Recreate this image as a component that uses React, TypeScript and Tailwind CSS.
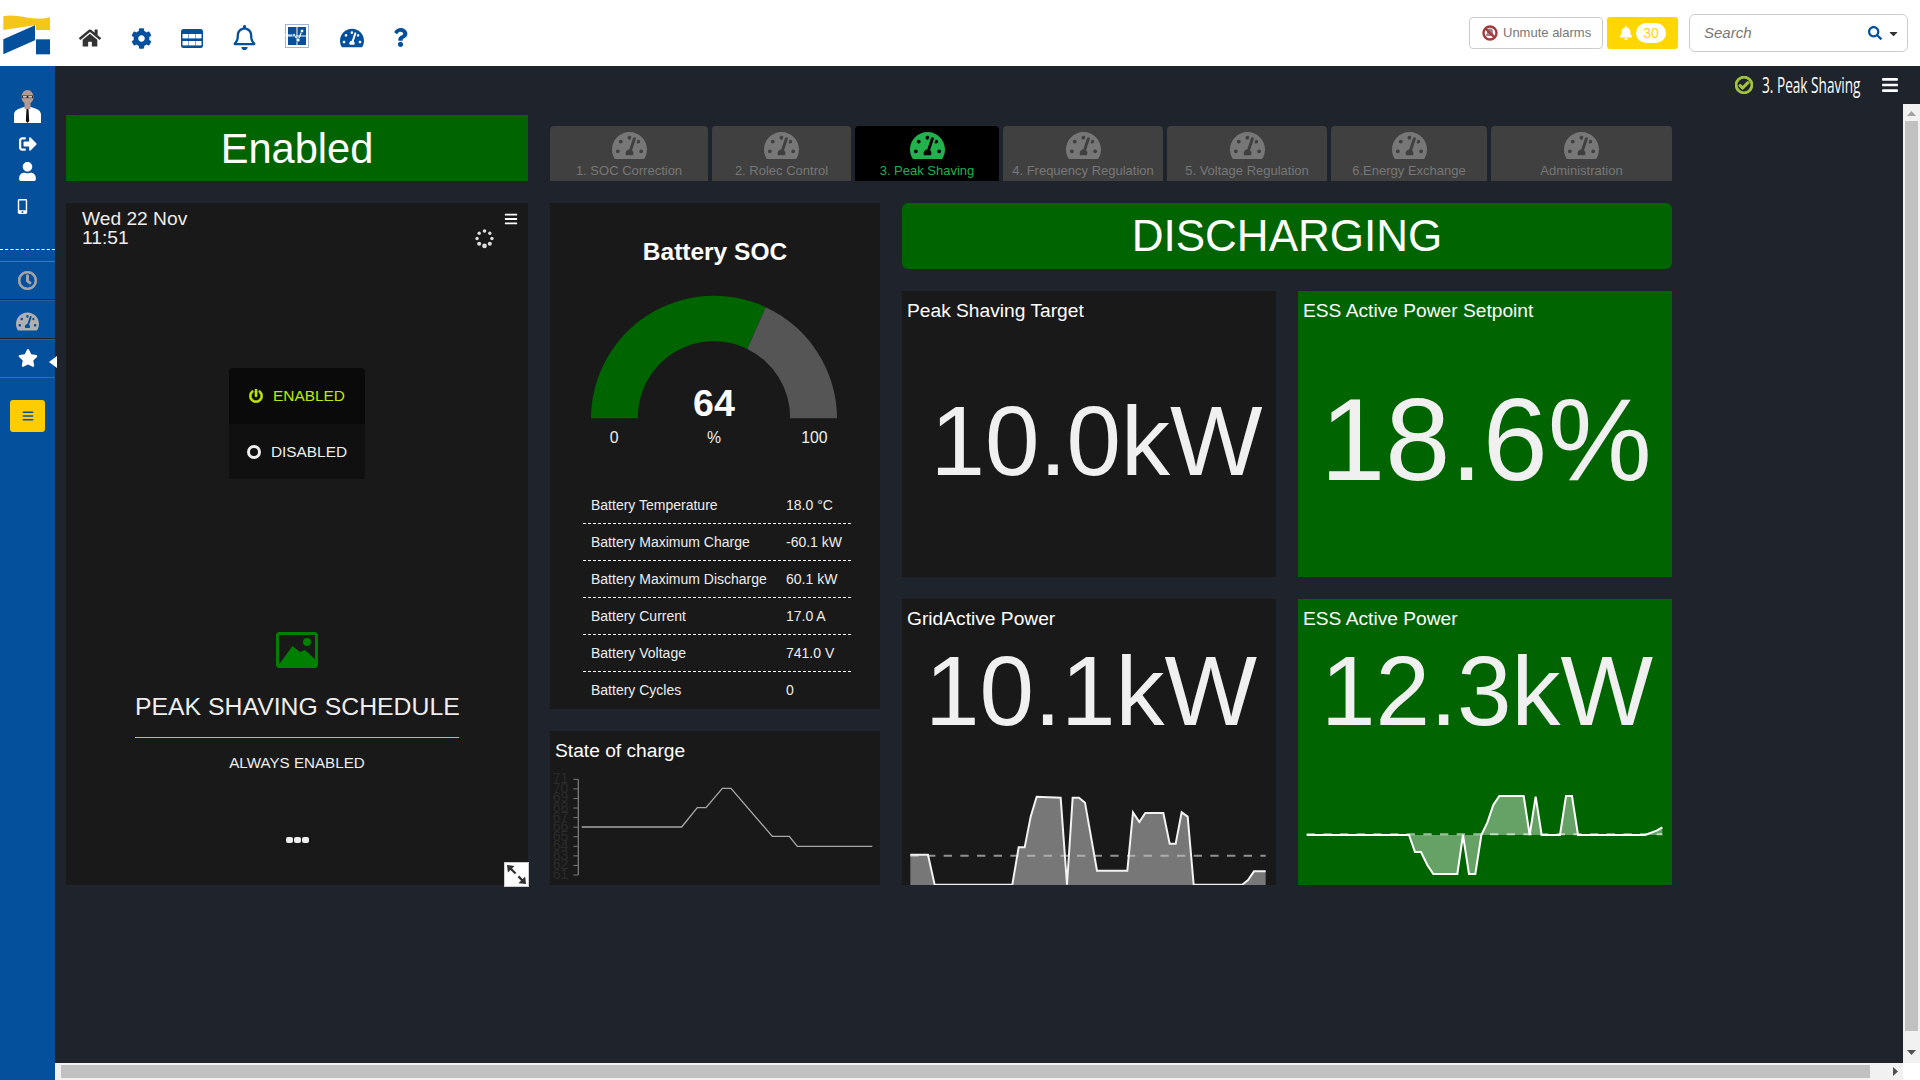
import { FaBars, FaBell, FaCaretDown, FaCog, FaHome, FaMobileAlt, FaPowerOff, FaQuestion, FaRegBell, FaRegCheckCircle, FaRegClock, FaSearch, FaSignOutAlt, FaStar, FaTachometerAlt, FaUser } from "react-icons/fa"

const tabs = [
    { name: "1. SOC Correction", width: "w-[158px]" },
    { name: "2. Rolec Control", width: "w-[139px]" },
    { name: "3. Peak Shaving", width: "w-[144px]", active: true },
    { name: "4. Frequency Regulation", width: "w-[160px]" },
    { name: "5. Voltage Regulation", width: "w-[160px]" },
    { name: "6.Energy Exchange", width: "w-[156px]" },
    { name: "Administration", width: "w-[181px]" },
]

const batteryRows = [
    ["Battery Temperature", "18.0 °C"],
    ["Battery Maximum Charge", "-60.1 kW"],
    ["Battery Maximum Discharge", "60.1 kW"],
    ["Battery Current", "17.0 A"],
    ["Battery Voltage", "741.0 V"],
    ["Battery Cycles", "0"],
]

/* chart points are in 3x px, the svg viewBox scales them back down */
const gridLine = "62,224 115,224 135,314 368,314 387,202 405,202 423,110 441,50 513,53 532,314 549,53 568,53 586,68 622,272 713,272 730,97 749,126 767,99 821,99 840,191 858,191 876,97 894,110 912,314 1058,314 1075,300 1093,274 1128,274"
const essLine = "50,165 357,165 375,216 393,216 412,255 430,282 502,282 519,165 537,282 556,282 574,165 592,128 610,75 628,48 701,48 719,165 737,50 755,165 810,165 828,48 846,48 864,165 1065,165 1100,152 1117,142"
const socLine = "125,321 425,321 472,263 498,263 547,205 573,205 697,349 748,349 772,379 997,379"
const socLabels = ["71", "70", "69", "68", "67", "66", "65", "64", "63", "62", "61"]

function Logo() {
    return (
        <svg viewBox="0 0 180 165" className="w-[60px] h-[55px] shrink-0">
            <path d="M10 31 C50 20 100 48 150 34 L150 72 L108 72 L108 57 L10 72 Z" fill="#f5c518" />
            <path d="M10 100 L105 58 L105 103 L10 145 Z" fill="#05509d" />
            <rect x="108" y="100" width="42" height="45" fill="#05509d" />
        </svg>
    )
}

function TableIcon() {
    const cells = [6, 13, 20]
    return (
        <svg viewBox="0 0 22 19" className="w-[22px] h-[19px]">
            <rect width="22" height="19" rx="2.5" fill="#05509d" />
            {cells.map((y) => [1.5, 8, 14.5].map((x) => (
                <rect key={`${x}-${y}`} x={x} y={y - 1} width="6" height="4.4" fill="#fff" />
            )))}
        </svg>
    )
}

function NetworkIcon() {
    return (
        <svg viewBox="0 0 24 24" className="w-[24px] h-[24px] -mt-[4px]">
            <rect x="0.5" y="0.5" width="23" height="23" fill="#fff" stroke="#9fb4d6" />
            <rect x="3" y="3" width="8.5" height="8.5" fill="#05509d" />
            <rect x="12.5" y="3" width="8.5" height="8.5" fill="#05509d" />
            <rect x="3" y="12.5" width="8.5" height="8.5" fill="#05509d" />
            <rect x="12.5" y="12.5" width="8.5" height="8.5" fill="#05509d" />
            <path d="M0 11 H9 L13 16 L17 7" fill="none" stroke="#fff" strokeWidth="1.2" />
            <circle cx="9" cy="11" r="1.5" fill="#fff" stroke="#05509d" strokeWidth="0.7" />
            <circle cx="13" cy="16" r="2" fill="#fff" stroke="#05509d" strokeWidth="0.7" />
            <circle cx="17" cy="7" r="1.8" fill="#fff" stroke="#05509d" strokeWidth="0.7" />
        </svg>
    )
}

function MutedBell() {
    return (
        <svg viewBox="0 0 16 16" className="w-[16px] h-[16px] mr-[5px] shrink-0">
            <path d="M8 3.5 C5.8 3.5 5 5.2 5 7 C5 9 4 10 3.5 11 H12.5 C12 10 11 9 11 7 C11 5.2 10.2 3.5 8 3.5 Z" fill="#8a8a8a" />
            <circle cx="8" cy="8" r="6.5" fill="none" stroke="#a53a3a" strokeWidth="2.4" />
            <path d="M3.5 3.5 L12.5 12.5" stroke="#a53a3a" strokeWidth="2.4" />
        </svg>
    )
}

function Avatar() {
    return (
        <svg viewBox="0 0 27 33" className="w-[27px] h-[33px]">
            <path d="M0 33 V25 C0 20 4 19 10 17 H17 C23 19 27 20 27 25 V33 Z" fill="#fff" />
            <rect x="10.5" y="12" width="6" height="7" fill="#b49a90" />
            <ellipse cx="13.5" cy="7" rx="6" ry="7" fill="#b49a90" />
            <rect x="8" y="5.5" width="11" height="2.6" fill="#2a2a2a" />
            <rect x="9" y="6" width="3.6" height="1.6" fill="#d7c6c0" />
            <rect x="14.4" y="6" width="3.6" height="1.6" fill="#d7c6c0" />
            <path d="M12.5 19 H14.5 L15.2 31 L13.5 33 L11.8 31 Z" fill="#111" />
        </svg>
    )
}

function Spinner() {
    const dots = [[8, 1, 1.7], [13, 3, 1.6], [15, 8, 1.6], [13, 13, 1.9], [8, 15, 2.2], [3, 13, 1.9], [1, 8, 1.6], [3, 3, 1.6]]
    return (
        <svg viewBox="0 0 16 16" className="w-[17px] h-[17px] overflow-visible">
            {dots.map(([x, y, r]) => <circle key={`${x}-${y}`} cx={x} cy={y} r={r} fill="#ddd" />)}
        </svg>
    )
}

function SideRow({ children, border }: { children: React.ReactNode; border: string }) {
    return <div className={`relative flex items-center justify-center w-full h-[38px] border-b ${border}`}>{children}</div>
}

function Sidebar() {
    return (
        <aside className="relative z-10 flex flex-col items-center w-[55px] shrink-0 bg-[#05509d]">
            <div className="mt-[24px]"><Avatar /></div>
            <FaSignOutAlt className="mt-[12px] text-white" size={18} />
            <FaUser className="mt-[9px] text-white" size={19} />
            <FaMobileAlt className="mt-[18px] text-white -ml-[10px]" size={15} />
            <div className="mt-[35px] w-full border-t border-dashed border-white"></div>
            <div className="mt-[11px] w-full h-px bg-[#5c6f86]"></div>
            <SideRow border="border-[#1d2530]"><FaRegClock className="text-[#a6a6a6]" size={19} stroke="currentColor" strokeWidth={24} /></SideRow>
            <div className="w-full h-px bg-[#2c5c92]"></div>
            <SideRow border="border-[#1d2530]"><FaTachometerAlt className="mt-[3px] text-[#b0b0b0]" size={23} /></SideRow>
            <div className="w-full h-px bg-[#2c5c92]"></div>
            <SideRow border="border-[#3a70b0]">
                <FaStar className="text-white -mt-[2px]" size={20} />
                <svg viewBox="0 0 8 12" className="absolute -right-[2px] top-[16px] w-[8px] h-[12px]"><polygon points="8,0 0,6 8,12" fill="#fff" /></svg>
            </SideRow>
            <div className="flex items-center justify-center mt-[22px] w-[35px] h-[32px] rounded-[3px] bg-[#ffcc00]">
                <FaBars className="text-[#05509d]" size={12} />
            </div>
        </aside>
    )
}

function Header() {
    return (
        <header className="flex items-center h-[66px] shrink-0 bg-white">
            <div className="flex items-center h-full pt-[1px]">
                <Logo />
                <div className="flex items-center w-[60px] justify-center text-[#333] pt-[9px]"><FaHome size={22} /></div>
                <div className="flex items-center w-[42px] justify-center text-[#05509d] pt-[9px]"><FaCog size={21} /></div>
                <div className="flex items-center w-[60px] justify-center pt-[9px]"><TableIcon /></div>
                <div className="flex items-center w-[45px] justify-center text-[#05509d] pt-[8px]"><FaRegBell size={25} /></div>
                <div className="flex items-center w-[60px] justify-center pt-[8px]"><NetworkIcon /></div>
                <div className="flex items-center w-[49px] justify-center text-[#05509d] pt-[9px]"><FaTachometerAlt size={24} /></div>
                <div className="flex items-center w-[49px] justify-center text-[#05509d] pt-[8px]"><FaQuestion size={19} /></div>
            </div>
            <div className="flex items-center ml-auto pr-[12px]">
                <button className="flex items-center w-[134px] h-[32px] pl-[12px] rounded-[4px] border border-[#ccc] bg-white text-[13px] text-[#777]">
                    <MutedBell />
                    Unmute alarms
                </button>
                <div className="flex items-center w-[71px] h-[32px] ml-[4px] pl-[12px] rounded-[3px] bg-[#ffd700]">
                    <FaBell className="text-white" size={14} />
                    <span className="flex items-center justify-center w-[30px] h-[20px] ml-[3px] rounded-full bg-white text-[14px] text-[#ffd700]">30</span>
                </div>
                <div className="flex items-center w-[219px] h-[38px] ml-[11px] pl-[14px] rounded-[6px] border border-[#ccc] bg-white">
                    <span className="text-[15px] italic text-[#777]">Search</span>
                    <FaSearch className="ml-auto text-[#05509d]" size={14} />
                    <FaCaretDown className="ml-[5px] mr-[7px] text-[#333]" size={13} />
                </div>
            </div>
        </header>
    )
}

function LeftPanel() {
    return (
        <div className="relative flex flex-col items-center h-[682px] bg-[#191919] text-[#eee]">
            <div className="flex justify-between w-full h-[45px] pl-[16px] pt-[6px] pr-[10px]">
                <div className="text-[19.2px] leading-[19px] whitespace-nowrap">Wed 22 Nov<br />11:51</div>
                <div className="flex">
                    <div className="mt-[21px]"><Spinner /></div>
                    <FaBars className="mt-[3px] ml-[11px] text-white" size={14} />
                </div>
            </div>
            <div className="flex flex-col w-[136px] mt-[120px] text-[15.4px]">
                <div className="flex items-center justify-center h-[56px] gap-[10px] rounded-t-[4px] bg-[#0a0a0a] text-[#bfe800]">
                    <FaPowerOff size={14} stroke="currentColor" strokeWidth={16} />ENABLED
                </div>
                <div className="flex items-center justify-center h-[55px] gap-[10px] pt-[1px] bg-[#101010]">
                    <div className="w-[14px] h-[14px] rounded-full border-[3px] border-[#eee]"></div>DISABLED
                </div>
            </div>
            <svg viewBox="0 0 42 36" className="w-[42px] h-[36px] mt-[153px]">
                <rect x="1.5" y="1.5" width="39" height="33" rx="2" fill="none" stroke="#008000" strokeWidth="3" />
                <circle cx="31" cy="10" r="4" fill="#008000" />
                <path d="M2 34 L16.5 14 L24 20 L29 18 L40 28 V34 Z" fill="#008000" />
            </svg>
            <div className="w-[324px] mt-[25px] pb-[16px] border-b border-[#f0b429] text-center text-[24.8px] leading-[28px] whitespace-nowrap">PEAK SHAVING SCHEDULE</div>
            <div className="mt-[16px] text-[15.2px] leading-[18px]">ALWAYS ENABLED</div>
            <div className="flex gap-[1px] mt-[65px]">
                <div className="w-[7px] h-[6px] rounded-[2px] bg-[#eee]"></div>
                <div className="w-[7px] h-[6px] rounded-[2px] bg-[#eee]"></div>
                <div className="w-[7px] h-[6px] rounded-[2px] bg-[#eee]"></div>
            </div>
            <div className="absolute -right-[1px] -bottom-[2px] w-[25px] h-[25px] bg-white border border-[#ccc]">
                <svg viewBox="0 0 24 24" className="w-full h-full">
                    <path d="M5 5 L11 11 M14 14 L19 19" stroke="#333" strokeWidth="2.4" fill="none" />
                    <polygon points="2,2 10,3 3,10" fill="#333" />
                    <polygon points="22,22 14,21 21,14" fill="#333" />
                </svg>
            </div>
        </div>
    )
}

function BatteryPanel() {
    return (
        <div className="flex flex-col h-[506px] bg-[#191919]">
            <h2 className="mt-[37px] text-center text-[24.5px] leading-[24px] font-bold text-white">Battery SOC</h2>
            <svg viewBox="550 280 330 170" className="block w-[330px] h-[170px] mt-[16px]">
                <path d="M589.5 420 A124.5 124.5 0 0 1 766.3 307.5 L747.7 349.7 A77 77 0 0 0 637 420 Z" fill="#006400" />
                <path d="M766.3 307.5 A124.5 124.5 0 0 1 838.5 420 L791 420 A77 77 0 0 0 747.7 349.7 Z" fill="#555" />
                <text x="714" y="418" textAnchor="middle" fontSize="38" fontWeight="700" fill="#fff">64</text>
                <text x="613" y="444.5" textAnchor="middle" fontSize="16" fill="#eee">0</text>
                <text x="714" y="444.5" textAnchor="middle" fontSize="16" fill="#eee">%</text>
                <text x="815.5" y="444.5" textAnchor="middle" fontSize="16" fill="#eee">100</text>
            </svg>
            <div className="flex flex-col w-[268px] ml-[33px] mt-[39px] text-[14px] text-[#eee]">
                {batteryRows.map(([label, value], i) => (
                    <div key={label} className={`flex items-center h-[37px] ${i < 5 ? "border-b border-dashed border-white" : ""}`}>
                        <span className="w-[203px] pl-[8px] whitespace-nowrap">{label}</span>
                        <span className="whitespace-nowrap">{value}</span>
                    </div>
                ))}
            </div>
        </div>
    )
}

function SocPanel() {
    return (
        <div className="flex flex-col h-[154px] bg-[#191919]">
            <div className="h-[39px] pl-[5px] pt-[9px] text-[19.2px] leading-[22px] text-white">State of charge</div>
            <svg viewBox="30 150 990 345" className="block w-[330px] h-[115px]">
                {socLabels.map((label, i) => (
                    <text key={label} x="38" y={190 + i * 28.7} fontSize="42" fill="#2b2b2b">{label}</text>
                ))}
                <path d="M115 178 V465" stroke="#777" strokeWidth="4" />
                {socLabels.map((label, i) => (
                    <path key={label} d={`M100 ${178 + i * 28.7} H115`} stroke="#777" strokeWidth="3" />
                ))}
                <polyline points={socLine} fill="none" stroke="#a8a8a8" strokeWidth="4" />
            </svg>
        </div>
    )
}

function ValueCard({ title, value, green, valueClass, children }: { title: string; value: string; green?: boolean; valueClass: string; children?: React.ReactNode }) {
    return (
        <div className={`flex flex-col h-[286px] overflow-hidden ${green ? "bg-[#006400]" : "bg-[#191919]"}`}>
            <div className="pl-[5px] pt-[9px] text-[19.2px] leading-[22px] text-white">{title}</div>
            <div className={`text-center leading-none whitespace-nowrap text-[#f0f0f0] ${valueClass}`}>{value}</div>
            {children}
        </div>
    )
}

function Scrollbars() {
    return (
        <div className="flex flex-col items-center w-[17px] shrink-0 bg-[#f1f1f1]">
            <svg viewBox="0 0 9 5" className="w-[9px] h-[5px] mt-[7px]"><polygon points="4.5,0 9,5 0,5" fill="#a3a3a3" /></svg>
            <div className="w-[13px] h-[910px] mt-[5px] bg-[#c1c1c1]"></div>
            <svg viewBox="0 0 9 5" className="w-[9px] h-[5px] mt-[19px]"><polygon points="0,0 9,0 4.5,5" fill="#505050" /></svg>
        </div>
    )
}

export default function App() {
    return (
        <div className="flex flex-col w-screen h-screen overflow-hidden bg-white font-['Liberation_Sans',Arial,sans-serif]">
            <Header />
            <div className="flex flex-1 min-h-0">
                <Sidebar />
                <main className="flex flex-col flex-1 min-w-0 bg-[#1f232b]">
                    <div className="flex items-center justify-end h-[38px] shrink-0 pr-[21px] text-white">
                        <FaRegCheckCircle className="text-[#a4c639]" size={18} stroke="currentColor" strokeWidth={30} />
                        <span className="w-[99px] ml-[9px] mr-[20px] -mt-[2px] origin-left scale-x-[0.62] font-['Open_Sans',sans-serif] text-[22px] leading-[24px] whitespace-nowrap">3. Peak Shaving</span>
                        <FaBars size={18} />
                    </div>
                    <div className="flex flex-1 min-h-0">
                        <div className="flex flex-1 min-w-0 gap-[22px] pl-[11px] pt-[11px]">
                            <div className="flex flex-col w-[462px] gap-[22px]">
                                <div className="flex items-center justify-center h-[66px] pt-[2px] bg-[#006400] text-[41.6px] text-white">Enabled</div>
                                <LeftPanel />
                            </div>
                            <div className="flex flex-col w-[1122px] pt-[11px]">
                                <div className="flex gap-[4px] h-[55px]">
                                    {tabs.map((tab) => (
                                        <div key={tab.name} className={`flex flex-col items-center ${tab.width} pt-[2px] rounded-t-[4px] text-[13px] leading-[13px] whitespace-nowrap ${tab.active ? "bg-black text-[#22b14c]" : "bg-[#404040] text-[#777]"}`}>
                                            <FaTachometerAlt size={35} />
                                            <span className="mt-[1px]">{tab.name}</span>
                                        </div>
                                    ))}
                                </div>
                                <div className="flex gap-[22px] mt-[22px]">
                                    <div className="flex flex-col w-[330px] gap-[22px]">
                                        <BatteryPanel />
                                        <SocPanel />
                                    </div>
                                    <div className="flex flex-col w-[770px] gap-[22px]">
                                        <div className="flex items-center justify-center h-[66px] rounded-[6px] bg-[#006400] text-[44px] text-white">DISCHARGING</div>
                                        <div className="grid grid-cols-2 gap-[22px]">
                                            <ValueCard title="Peak Shaving Target" value="10.0kW" valueClass="text-[98px] mt-[70px] pl-[15px]" />
                                            <ValueCard title="ESS Active Power Setpoint" value="18.6%" green valueClass="text-[117px] mt-[59px] pl-[2px]" />
                                            <ValueCard title="GridActive Power" value="10.1kW" valueClass="text-[98px] mt-[12px] pl-[4px]">
                                                <svg viewBox="37 0 1122 315" className="block w-[374px] h-[105px] mt-auto">
                                                    <polygon points={`62,315 ${gridLine} 1128,315`} fill="#777" />
                                                    <path d="M62 227 H1128" stroke="#c4c4c4" strokeOpacity="0.7" strokeWidth="6" strokeDasharray="25 25" />
                                                    <polyline points={gridLine} fill="none" stroke="#f2f2f2" strokeWidth="6" />
                                                </svg>
                                            </ValueCard>
                                            <ValueCard title="ESS Active Power" value="12.3kW" green valueClass="text-[98px] mt-[12px] pl-[4px]">
                                                <svg viewBox="24 0 1122 315" className="block w-[374px] h-[105px] mt-auto">
                                                    <polygon points={`50,165 ${essLine} 1117,165`} fill="#fff" fillOpacity="0.4" />
                                                    <path d="M50 163 H1117" stroke="#fff" strokeOpacity="0.6" strokeWidth="6" strokeDasharray="25 25" />
                                                    <polyline points={essLine} fill="none" stroke="#fff" strokeWidth="6" />
                                                </svg>
                                            </ValueCard>
                                        </div>
                                    </div>
                                </div>
                            </div>
                        </div>
                        <Scrollbars />
                    </div>
                    <div className="flex h-[17px] shrink-0 bg-white">
                        <div className="flex flex-1 items-center pl-[6px] bg-[#f1f1f1]">
                            <div className="w-[1809px] h-[13px] bg-[#c1c1c1]"></div>
                            <svg viewBox="0 0 5 9" className="w-[5px] h-[9px] ml-[23px]"><polygon points="0,0 5,4.5 0,9" fill="#505050" /></svg>
                        </div>
                        <div className="w-[17px]"></div>
                    </div>
                </main>
            </div>
        </div>
    )
}
